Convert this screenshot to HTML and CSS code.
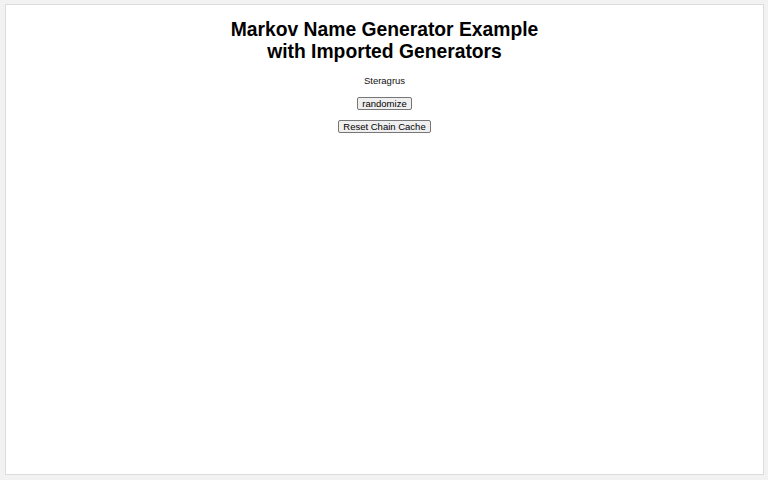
FILE: index.html
```html
<!DOCTYPE html>
<html lang="en">
<head>
    <meta charset="UTF-8">
    <meta name="viewport" content="width=device-width, initial-scale=1.0">
    <title>Markov Name Generator Example</title>
    <link rel="stylesheet" href="styles.css">
</head>
<body>

    <div class="page">
        <h1>Markov Name Generator Example<br>with Imported Generators</h1>
        <p id="name" class="name">Steragrus</p>
        <button class="btn" onclick="randomize()">randomize</button>
        <button class="btn" onclick="resetCache()">Reset Chain Cache</button>
    </div>

    <script>
        const names = ["Steragrus", "Belamor", "Tharvin", "Oskaleth", "Merigan"];

        function randomize() {
            const pick = names[Math.floor(Math.random() * names.length)];
            document.getElementById("name").innerText = pick;
        }

        function resetCache() {
            document.getElementById("name").innerText = names[0];
        }
    </script>

</body>
</html>
```

FILE: styles.css
```css
* {
    margin: 0;
    padding: 0;
    box-sizing: border-box;
}
html, body {
    height: 100%;
}
body {
    background: #f2f2f2;
    padding: 4px 4px 5px 5px;
    font-family: "Liberation Sans", Arial, sans-serif;
}
.page {
    height: 100%;
    background: white;
    border: 1px solid #dcdcdc;
    display: flex;
    flex-direction: column;
    align-items: center;
    padding-top: 14px;
}
h1 {
    font-size: 19.3px;
    line-height: 22px;
    text-align: center;
    color: #000;
}
.name {
    margin-top: 12px;
    font-size: 9.5px;
    line-height: 12px;
    color: #111;
}
.btn {
    font-family: "Liberation Sans", Arial, sans-serif;
    font-size: 9.5px;
    line-height: 11px;
    padding: 0 4px;
    margin-top: 10px;
    background: #efefef;
    border: 1px solid #767676;
    border-radius: 2px;
    color: #000;
}
.btn + .btn {
    margin-top: 10px;
}
```
